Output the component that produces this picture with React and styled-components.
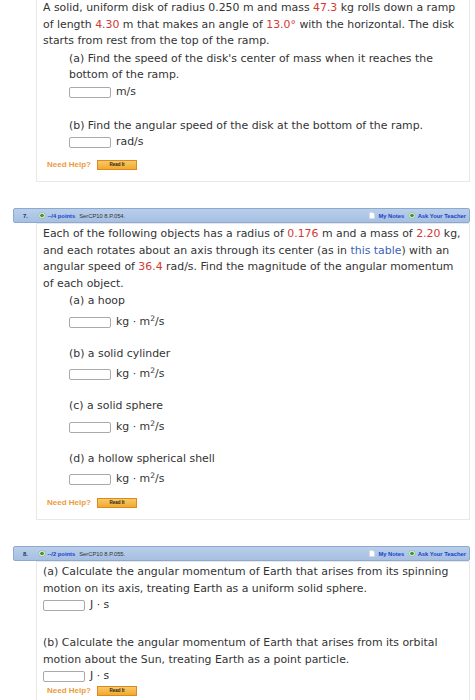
import React from 'react'
import styled, { createGlobalStyle } from 'styled-components'

const GlobalStyle = createGlobalStyle`
    html, body {
        margin:0;
        padding:0;
        background:#ffffff;
    }
    body {
        font-family:"DejaVu Sans", Verdana, sans-serif;
        color:#333333;
    }
`

const Page = styled.div`
    display:flex;
    flex-direction:column;
    padding:0 5px 0 13px;
`

const Card = styled.div`
    margin-left:23px;
    border:1px solid #e8e8e8;
    border-top:${({top}) => top ? 'none' : '1px solid #e8e8e8'};
    padding:${({top}) => top ? '0' : '2px'} 6px 10px 6px;
    margin-bottom:26px;
    font-size:10.9px;
    line-height:16.5px;
`

const Para = styled.div`
    margin-top:${({gap}) => gap || 0}px;
`

const Part = styled.div`
    margin-left:${({indent}) => indent ? 26 : 0}px;
    margin-top:${({gap}) => gap || 0}px;
`

const Red = styled.span`
    color:#d23a35;
`

const TableLink = styled.span`
    color:#3b62b8;
`

const AnswerRow = styled.div`
    display:flex;
    align-items:center;
    gap:5px;
    height:17px;
    margin-top:${({gap}) => gap || 0}px;
`

const Input = styled.div`
    width:40px;
    height:9px;
    border:1px solid #a9a9a9;
    border-radius:2px;
    background:#fff;
`

const Unit = styled.span`
    sup {
        font-size:7.5px;
        line-height:0;
        vertical-align:4px;
    }
`

const HelpRow = styled.div`
    display:flex;
    align-items:center;
    gap:6px;
    margin-top:${({gap}) => gap || 0}px;
    margin-left:4px;
    height:12px;
`

const NeedHelp = styled.span`
    color:#ec9a3c;
    font-weight:bold;
    font-size:8px;
    font-family:"Liberation Sans", Arial, sans-serif;
`

const ReadIt = styled.div`
    width:38px;
    height:8px;
    border:1px solid #d98b1f;
    background:linear-gradient(#f9c867, #f2a92c);
    display:flex;
    align-items:center;
    justify-content:center;
    font-size:4.5px;
    font-weight:bold;
    color:#222;
    font-family:"Liberation Sans", Arial, sans-serif;
`

const Bar = styled.div`
    display:flex;
    align-items:center;
    height:13px;
    border:1px solid #8ea9cf;
    border-radius:2px;
    background:linear-gradient(#b9cfeb, #a6c0e3);
    padding:0 3px 0 9px;
    font-family:"Liberation Sans", Arial, sans-serif;
    font-size:5.8px;
    font-weight:bold;
`

const Num = styled.span`
    color:#24355c;
    width:16px;
`

const Dot = styled.span`
    width:3.5px;
    height:3.5px;
    border-radius:50%;
    background:#3c9a3c;
    border:1.5px solid #f2f7ef;
    box-shadow:0 0 0 0.5px #9bb59b;
    margin-right:3px;
`

const Points = styled.span`
    color:#1b3fc8;
    margin-right:4px;
`

const Source = styled.span`
    color:#333;
    font-weight:normal;
`

const Spacer = styled.div`
    flex:1;
`

const BlueLink = styled.span`
    color:#1b3fc8;
    margin-right:${({mr}) => mr || 0}px;
`

const DocIcon = () => (
    <svg width="6" height="7" viewBox="0 0 6 7" style={{ marginRight: 3 }}>
        <path d="M0.5 0.5 H4 L5.5 2 V6.5 H0.5 Z" fill="#ffffff" stroke="#c9d4e2" strokeWidth="0.5" />
    </svg>
)

const QuestionBar = ({ num, points, source }) => (
    <Bar>
        <Num>{num}.</Num>
        <Dot />
        <Points>--/{points} points</Points>
        <Source>{source}</Source>
        <Spacer />
        <DocIcon />
        <BlueLink mr={5}>My Notes</BlueLink>
        <Dot />
        <BlueLink>Ask Your Teacher</BlueLink>
    </Bar>
)

const Answer = ({ unit, gap }) => (
    <AnswerRow gap={gap}>
        <Input />
        <Unit>{unit}</Unit>
    </AnswerRow>
)

const Help = ({ gap }) => (
    <HelpRow gap={gap}>
        <NeedHelp>Need Help?</NeedHelp>
        <ReadIt>Read It</ReadIt>
    </HelpRow>
)

const kgm = <>kg · m<sup>2</sup>/s</>

const App = () => {
    return (
        <>
            <GlobalStyle />
            <Page>
                <Card top>
                    <Para>
                        A solid, uniform disk of radius 0.250 m and mass <Red>47.3</Red> kg rolls down a ramp
                        of length <Red>4.30</Red> m that makes an angle of <Red>13.0°</Red> with the horizontal. The disk
                        starts from rest from the top of the ramp.
                    </Para>
                    <Part indent gap={1}>
                        (a) Find the speed of the disk's center of mass when it reaches the bottom of the ramp.
                        <Answer unit="m/s" />
                    </Part>
                    <Part indent gap={17}>
                        (b) Find the angular speed of the disk at the bottom of the ramp.
                        <Answer unit="rad/s" />
                    </Part>
                    <Help gap={8} />
                </Card>

                <QuestionBar num="7" points="4" source="SerCP10 8.P.054." />
                <Card>
                    <Para>
                        Each of the following objects has a radius of <Red>0.176</Red> m and a mass of <Red>2.20</Red> kg,
                        and each rotates about an axis through its center (as in <TableLink>this table</TableLink>) with an
                        angular speed of <Red>36.4</Red> rad/s. Find the magnitude of the angular momentum
                        of each object.
                    </Para>
                    <Part indent gap={1}>
                        (a) a hoop
                        <Answer unit={kgm} gap={4} />
                    </Part>
                    <Part indent gap={15}>
                        (b) a solid cylinder
                        <Answer unit={kgm} gap={4} />
                    </Part>
                    <Part indent gap={15}>
                        (c) a solid sphere
                        <Answer unit={kgm} gap={4} />
                    </Part>
                    <Part indent gap={15}>
                        (d) a hollow spherical shell
                        <Answer unit={kgm} gap={4} />
                    </Part>
                    <Help gap={9} />
                </Card>

                <QuestionBar num="8" points="2" source="SerCP10 8.P.055." />
                <Card>
                    <Part>
                        (a) Calculate the angular momentum of Earth that arises from its spinning
                        motion on its axis, treating Earth as a uniform solid sphere.
                        <Answer unit="J · s" />
                    </Part>
                    <Part gap={21}>
                        (b) Calculate the angular momentum of Earth that arises from its orbital
                        motion about the Sun, treating Earth as a point particle.
                        <Answer unit="J · s" />
                    </Part>
                    <Help gap={0} />
                </Card>
            </Page>
        </>
    )
}

export default App
